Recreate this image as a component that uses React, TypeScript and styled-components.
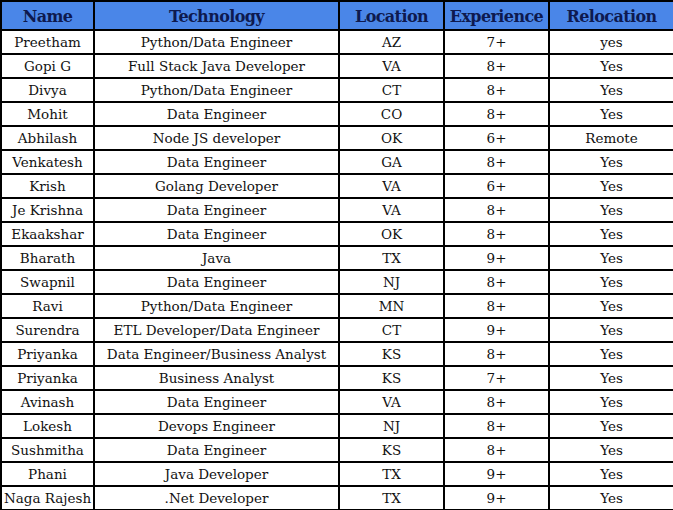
import React from "react";
import styled, { createGlobalStyle } from "styled-components";

const GlobalStyle = createGlobalStyle`
  html, body {
    margin: 0;
    padding: 0;
    background: #ffffff;
  }
`;

const Sheet = styled.table`
  width: 673px;
  border-collapse: collapse;
  table-layout: fixed;
  font-family: "DejaVu Serif", "Liberation Serif", serif;
  color: #111111;
`;

const HeadCell = styled.th`
  height: 25px;
  padding: 2px 0 0;
  background: #4a86e8;
  color: #0e1a4f;
  border: 2px solid #000000;
  font-size: 16px;
  font-weight: 700;
  text-align: center;
  white-space: nowrap;
  letter-spacing: -0.6px;
`;

const Cell = styled.td`
  height: 22px;
  padding: 0;
  border: 2px solid #000000;
  font-size: 13.5px;
  text-align: center;
  white-space: nowrap;
`;

const widths = [93, 245, 105, 105, 125];
const headers = ["Name", "Technology", "Location", "Experience", "Relocation"];

type Row = [string, string, string, string, string];

const rows: Row[] = [
  ["Preetham", "Python/Data Engineer", "AZ", "7+", "yes"],
  ["Gopi G", "Full Stack Java Developer", "VA", "8+", "Yes"],
  ["Divya", "Python/Data Engineer", "CT", "8+", "Yes"],
  ["Mohit", "Data Engineer", "CO", "8+", "Yes"],
  ["Abhilash", "Node JS developer", "OK", "6+", "Remote"],
  ["Venkatesh", "Data Engineer", "GA", "8+", "Yes"],
  ["Krish", "Golang Developer", "VA", "6+", "Yes"],
  ["Je Krishna", "Data Engineer", "VA", "8+", "Yes"],
  ["Ekaakshar", "Data Engineer", "OK", "8+", "Yes"],
  ["Bharath", "Java", "TX", "9+", "Yes"],
  ["Swapnil", "Data Engineer", "NJ", "8+", "Yes"],
  ["Ravi", "Python/Data Engineer", "MN", "8+", "Yes"],
  ["Surendra", "ETL Developer/Data Engineer", "CT", "9+", "Yes"],
  ["Priyanka", "Data Engineer/Business Analyst", "KS", "8+", "Yes"],
  ["Priyanka", "Business Analyst", "KS", "7+", "Yes"],
  ["Avinash", "Data Engineer", "VA", "8+", "Yes"],
  ["Lokesh", "Devops Engineer", "NJ", "8+", "Yes"],
  ["Sushmitha", "Data Engineer", "KS", "8+", "Yes"],
  ["Phani", "Java Developer", "TX", "9+", "Yes"],
  ["Naga Rajesh", ".Net Developer", "TX", "9+", "Yes"],
];

export default function App() {
  return (
    <>
      <GlobalStyle />
      <Sheet>
        <colgroup>
          {widths.map((w, i) => (
            <col key={i} style={{ width: w }} />
          ))}
        </colgroup>
        <thead>
          <tr>
            {headers.map((h) => (
              <HeadCell key={h}>{h}</HeadCell>
            ))}
          </tr>
        </thead>
        <tbody>
          {rows.map((r, i) => (
            <tr key={i}>
              {r.map((c, j) => (
                <Cell key={j}>{c}</Cell>
              ))}
            </tr>
          ))}
        </tbody>
      </Sheet>
    </>
  );
}
